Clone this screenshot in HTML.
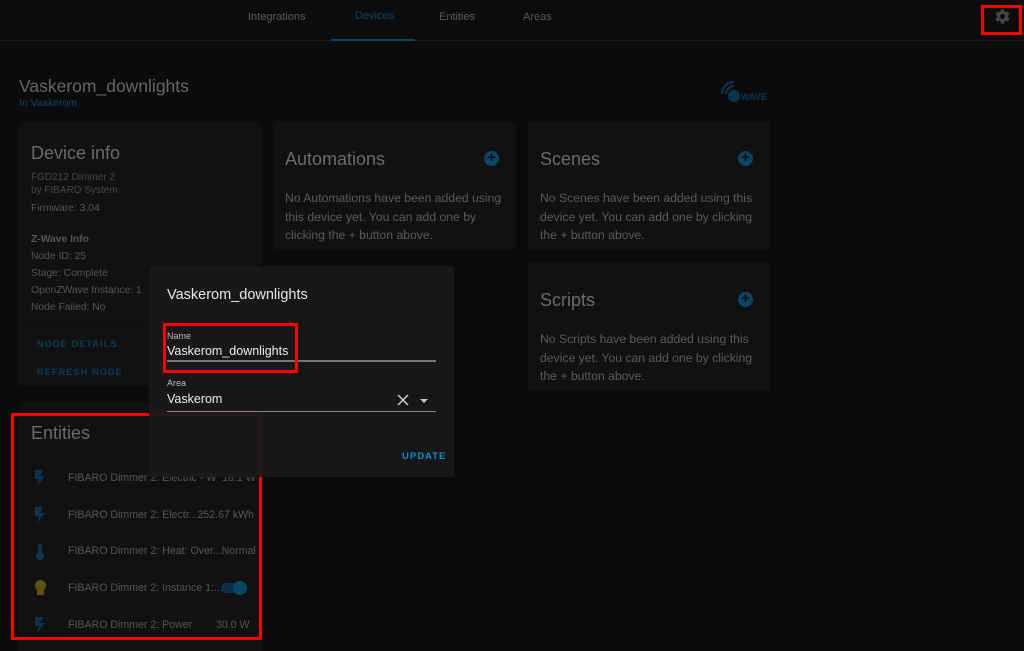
<!DOCTYPE html><html><head><style>
*{margin:0;padding:0;box-sizing:border-box}
html,body{width:1024px;height:651px;overflow:hidden}
body{background:#0b0b0b;font-family:"Liberation Sans",sans-serif;position:relative;color:#6a6a6a}
.a{position:absolute}
.card{position:absolute;background:#111;border-radius:3px}
.t{font-size:18px;color:#6a6a6a}
.p{font-size:12.2px;line-height:18.5px;color:#5a5a5a}
.plus{position:absolute;width:15px;height:15px;border-radius:50%;background:#0a4466;color:#0b0b0b;font-size:15px;line-height:14px;text-align:center;font-weight:bold}
.red{position:absolute;border:3px solid #f00}
.ent{position:absolute;left:68px;font-size:10.6px;color:#555}
</style></head><body>
<div class="a" style="left:0;top:0;width:1024px;height:41px;border-bottom:1px solid #181818;background:#0c0c0c"></div>
<div class="a" style="left:248px;top:11px;font-size:11px;color:#5a5a5a">Integrations</div>
<div class="a" style="left:355px;top:10px;font-size:11px;color:#0a4466">Devices</div>
<div class="a" style="left:331px;top:39px;width:84px;height:2px;background:#0a4466"></div>
<div class="a" style="left:439px;top:11px;font-size:11px;color:#5a5a5a">Entities</div>
<div class="a" style="left:523px;top:11px;font-size:11px;color:#5a5a5a">Areas</div>
<svg class="a" style="left:994px;top:8px" width="17" height="17" viewBox="0 0 24 24"><path fill="#444" d="M12,15.5A3.5,3.5 0 0,1 8.5,12A3.5,3.5 0 0,1 12,8.5A3.5,3.5 0 0,1 15.5,12A3.5,3.5 0 0,1 12,15.5M19.43,12.97C19.47,12.65 19.5,12.33 19.5,12C19.5,11.67 19.47,11.34 19.43,11L21.54,9.37C21.73,9.22 21.78,8.950 21.66,8.73L19.66,5.27C19.54,5.05 19.27,4.96 19.05,5.05L16.56,6.05C16.04,5.66 15.5,5.32 14.87,5.07L14.5,2.42C14.46,2.18 14.25,2 14,2H10C9.75,2 9.54,2.18 9.5,2.42L9.13,5.07C8.5,5.32 7.96,5.66 7.440,6.05L4.95,5.05C4.73,4.96 4.46,5.05 4.34,5.27L2.34,8.73C2.21,8.95 2.27,9.22 2.46,9.37L4.57,11C4.53,11.34 4.5,11.67 4.5,12C4.5,12.33 4.53,12.65 4.57,12.97L2.46,14.63C2.27,14.78 2.21,15.05 2.34,15.27L4.34,18.73C4.46,18.95 4.73,19.03 4.95,18.95L7.44,17.94C7.96,18.34 8.5,18.68 9.13,18.93L9.5,21.58C9.54,21.82 9.75,22 10,22H14C14.25,22 14.46,21.82 14.5,21.58L14.87,18.93C15.5,18.67 16.04,18.34 16.56,17.94L19.05,18.95C19.27,19.03 19.54,18.95 19.66,18.73L21.66,15.27C21.78,15.05 21.73,14.78 21.54,14.63L19.43,12.97Z"/></svg>
<div class="red" style="left:981px;top:5px;width:41px;height:30px"></div>
<div class="a" style="left:19px;top:76px;font-size:17.5px;color:#666">Vaskerom_downlights</div>
<div class="a" style="left:19px;top:97px;font-size:10.5px;color:#0a4466">In Vaskerom</div>
<svg class="a" style="left:718px;top:80px" width="54" height="24" viewBox="0 0 54 24"><path d="M8 14a8 8 0 0 1 8-8M4 14a12 12 0 0 1 12-12" stroke="#0a3550" stroke-width="2" fill="none"/><circle cx="16" cy="16" r="6" fill="#0a3550"/><text x="23" y="20" font-family="Liberation Sans" font-weight="bold" font-size="9" fill="#0a3550">WAVE</text></svg>
<div class="card" style="left:19px;top:122px;width:242px;height:264px"></div>
<div class="a t" style="left:31px;top:143px">Device info</div>
<div class="a" style="left:31px;top:171px;font-size:10px;line-height:13px;color:#454545">FGD212 Dimmer 2<br>by FIBARO System</div>
<div class="a" style="left:31px;top:203px;font-size:10.3px;color:#555">Firmware: 3.04</div>
<div class="a" style="left:31px;top:231px;font-size:10.3px;line-height:17px;color:#555"><b>Z-Wave Info</b><br>Node ID: 25<br>Stage: Complete<br>OpenZWave Instance: 1<br>Node Failed: No</div>
<div class="a" style="left:19px;top:326px;width:242px;height:1px;background:#0e0e0e"></div>
<div class="a" style="left:37px;top:339px;font-size:9.3px;font-weight:bold;letter-spacing:1px;color:#0a3a58">NODE DETAILS</div>
<div class="a" style="left:37px;top:367px;font-size:9.3px;font-weight:bold;letter-spacing:1px;color:#0a3a58">REFRESH NODE</div>
<div class="card" style="left:19px;top:402px;width:242px;height:260px"></div>
<div class="a t" style="left:31px;top:423px">Entities</div>
<div class="ent" style="top:472px">FIBARO Dimmer 2: Electric - W&nbsp;&nbsp;18.1 W</div>
<div class="ent" style="top:509px">FIBARO Dimmer 2: Electr...252.67 kWh</div>
<div class="ent" style="top:545px">FIBARO Dimmer 2: Heat: Over...Normal</div>
<div class="ent" style="top:582px">FIBARO Dimmer 2: Instance 1:...</div>
<div class="ent" style="top:619px">FIBARO Dimmer 2: Power</div>
<div class="a" style="left:216px;top:619px;font-size:10.6px;color:#555">30.0 W</div>
<svg class="a" style="left:34px;top:470px" width="12" height="16" viewBox="0 0 12 16"><path d="M1 0h8L6 6h5L3 16l2-7H1z" fill="#0e3350"/></svg>
<svg class="a" style="left:34px;top:507px" width="12" height="16" viewBox="0 0 12 16"><path d="M1 0h8L6 6h5L3 16l2-7H1z" fill="#0e3350"/></svg>
<svg class="a" style="left:34px;top:544px" width="12" height="16" viewBox="0 0 12 16"><rect x="4" y="0" width="4" height="11" rx="2" fill="#0e3350"/><circle cx="6" cy="12" r="4" fill="#0e3350"/></svg>
<div class="a" style="left:35px;top:580px;width:11px;height:11px;border-radius:50%;background:#5e4f10"></div>
<div class="a" style="left:37px;top:589px;width:7px;height:6px;background:#5e4f10"></div>
<svg class="a" style="left:34px;top:617px" width="12" height="16" viewBox="0 0 12 16"><path d="M1 0h8L6 6h5L3 16l2-7H1z" fill="#0e3350"/></svg>
<div class="a" style="left:221px;top:583px;width:26px;height:10px;border-radius:5px;background:#0a3048"></div>
<div class="a" style="left:233px;top:581px;width:14px;height:14px;border-radius:50%;background:#0a4466"></div>
<div class="red" style="left:11px;top:413px;width:251px;height:227px"></div>
<div class="card" style="left:273px;top:122px;width:243px;height:128px"></div>
<div class="a t" style="left:285px;top:149px">Automations</div>
<div class="plus" style="left:484px;top:151px">+</div>
<div class="a p" style="left:285px;top:189px">No Automations have been added using<br>this device yet. You can add one by<br>clicking the + button above.</div>
<div class="card" style="left:528px;top:122px;width:242px;height:128px"></div>
<div class="a t" style="left:540px;top:149px">Scenes</div>
<div class="plus" style="left:738px;top:151px">+</div>
<div class="a p" style="left:540px;top:189px">No Scenes have been added using this<br>device yet. You can add one by clicking<br>the + button above.</div>
<div class="card" style="left:528px;top:262px;width:242px;height:128px"></div>
<div class="a t" style="left:540px;top:290px">Scripts</div>
<div class="plus" style="left:738px;top:292px">+</div>
<div class="a p" style="left:540px;top:330px">No Scripts have been added using this<br>device yet. You can add one by clicking<br>the + button above.</div>
<div class="a" style="left:149px;top:266px;width:305px;height:211px;background:#191919;opacity:.93"></div>
<div class="a" style="left:167px;top:287px;font-size:14.5px;color:#e8e8e8">Vaskerom_downlights</div>
<div class="a" style="left:167px;top:331px;font-size:9px;color:#bbb">Name</div>
<div class="a" style="left:167px;top:344px;font-size:12.5px;color:#eee">Vaskerom_downlights</div>
<div class="a" style="left:167px;top:360px;width:269px;height:2px;background:#777"></div>
<div class="a" style="left:167px;top:378px;font-size:9px;color:#bbb">Area</div>
<div class="a" style="left:167px;top:392px;font-size:12.5px;color:#eee">Vaskerom</div>
<svg class="a" style="left:397px;top:394px" width="12" height="12" viewBox="0 0 12 12"><path d="M1 1L11 11M11 1L1 11" stroke="#ccc" stroke-width="1.5"/></svg>
<div class="a" style="left:420px;top:399px;border:4px solid transparent;border-top:4px solid #ccc"></div>
<div class="a" style="left:167px;top:411px;width:269px;height:1px;background:#888"></div>
<div class="a" style="left:402px;top:451px;font-size:9.5px;font-weight:bold;letter-spacing:1px;color:#0a8ed0">UPDATE</div>
<div class="red" style="left:163px;top:323px;width:135px;height:50px"></div>
</body></html>
